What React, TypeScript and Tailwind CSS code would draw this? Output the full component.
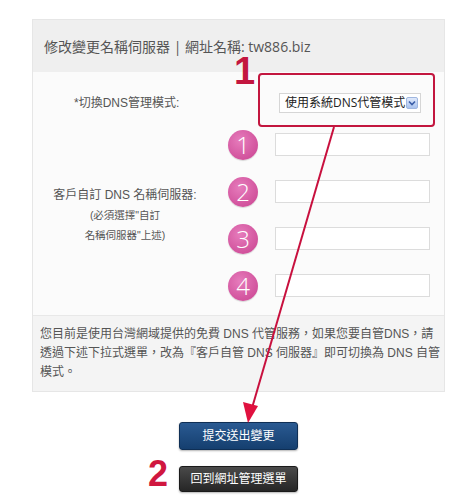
import React from 'react';

const font = "font-['Open_Sans','Noto_Sans_CJK_TC',sans-serif]";
const smallFont = "font-['Liberation_Sans','Noto_Sans_CJK_TC',sans-serif]";

const NumberBadge = ({ n }: { n: number }) => (
  <div className="w-[30px] h-[30px] rounded-full bg-[radial-gradient(circle_at_40%_35%,#e67cbc,#c9418f)] flex items-center justify-center text-white text-[24px] font-light leading-none shadow-[0_1px_1px_rgba(0,0,0,0.15)]">
    {n}
  </div>
);

const App = () => {
  return (
    <div className={`relative w-[474px] h-[495px] bg-white overflow-hidden ${font}`}>
      <div className="ml-[32px] mt-[19px] w-[413px] border border-[#e6e6e6]">
        {/* header */}
        <div className="h-[52px] bg-[#efefef] px-[11px] flex items-center text-[14px] text-[#555] whitespace-nowrap">
          修改變更名稱伺服器 | 網址名稱: tw886.biz
        </div>

        {/* body */}
        <div className="bg-[#fbfbfb] pt-[21px] pb-[18px]">
          <div className="flex items-center h-[20px]">
            <div className={`w-[246px] pl-[41px] text-[12px] text-[#555] whitespace-nowrap ${smallFont}`}>
              *切換DNS管理模式:
            </div>
            <div className="w-[142px] h-[20px] bg-white border border-[#d6d6d6] flex items-center justify-between pl-[5px] pr-[2px] text-[12px] text-[#222] whitespace-nowrap">
              <span>使用系統DNS代管模式</span>
              <span className="w-[12px] h-[12px] rounded-[2px] bg-[linear-gradient(#dfe9fb,#a9c2ee)] border border-[#9fb6df] flex items-center justify-center">
                <svg width="8" height="6" viewBox="0 0 8 6">
                  <path d="M1 1.5 L4 4.5 L7 1.5" stroke="#3a5da8" strokeWidth="1.6" fill="none" />
                </svg>
              </span>
            </div>
          </div>

          <div className="flex mt-[20px]">
            <div className={`w-[184px] flex flex-col items-center justify-center text-[#555] whitespace-nowrap ${smallFont}`}>
              <div className="text-[12px] leading-[20px]">客戶自訂 DNS 名稱伺服器:</div>
              <div className="text-[10.5px] leading-[20px]">(必須選擇"自訂</div>
              <div className="text-[10.5px] leading-[20px]">名稱伺服器"上述)</div>
            </div>
            <div className="flex flex-col gap-[24px]">
              {[1, 2, 3, 4].map((n) => (
                <div key={n} className="flex items-center h-[23px]">
                  <div className="w-[58px] flex justify-center pr-[6px]">
                    <NumberBadge n={n} />
                  </div>
                  <div className="w-[155px] h-[23px] bg-white border border-[#dcdcdc]" />
                </div>
              ))}
            </div>
          </div>
        </div>

        {/* note */}
        <div className={`bg-[#f4f4f4] border-t border-[#e8e8e8] pl-[7px] pr-[4px] pt-[9px] pb-[9px] text-[12px] leading-[19px] text-[#555] whitespace-nowrap ${smallFont}`}>
          <div>您目前是使用台灣網域提供的免費 DNS 代管服務，如果您要自管DNS，請</div>
          <div>透過下述下拉式選單，改為『客戶自管 DNS 伺服器』即可切換為 DNS 自管</div>
          <div>模式。</div>
        </div>
      </div>

      {/* buttons */}
      <div className="ml-[32px] w-[413px] flex flex-col items-center gap-[16px] mt-[30px]">
        <button className="w-[119px] h-[28px] rounded-[3px] bg-[linear-gradient(#2a5a92,#153f6f)] border border-[#0f2f55] text-white text-[12px] shadow-[0_1px_2px_rgba(0,0,0,0.3)]">
          提交送出變更
        </button>
        <button className="w-[119px] h-[26px] rounded-[3px] bg-[linear-gradient(#4a4a4a,#262626)] border border-[#1a1a1a] text-white text-[12px] shadow-[0_1px_2px_rgba(0,0,0,0.3)]">
          回到網址管理選單
        </button>
      </div>

      {/* annotations */}
      <div className="absolute left-[258px] top-[73px] w-[177px] h-[54px] border-[2.5px] border-[#c3163f] rounded-[4px]" />
      <div className="absolute left-[234px] top-[52px] text-[#c3163f] text-[38px] font-bold leading-none font-['Liberation_Sans',sans-serif]">
        1
      </div>
      <div className="absolute left-[148px] top-[456px] text-[#d0173f] text-[36px] font-bold leading-none font-['Liberation_Sans',sans-serif]">
        2
      </div>
      <svg className="absolute inset-0 pointer-events-none" width="474" height="495">
        <line x1="334" y1="127" x2="252" y2="408" stroke="#c8103e" strokeWidth="2" />
        <polygon points="248,423 243,402 258,406" fill="#e0113f" />
      </svg>
    </div>
  );
};

export default App;
